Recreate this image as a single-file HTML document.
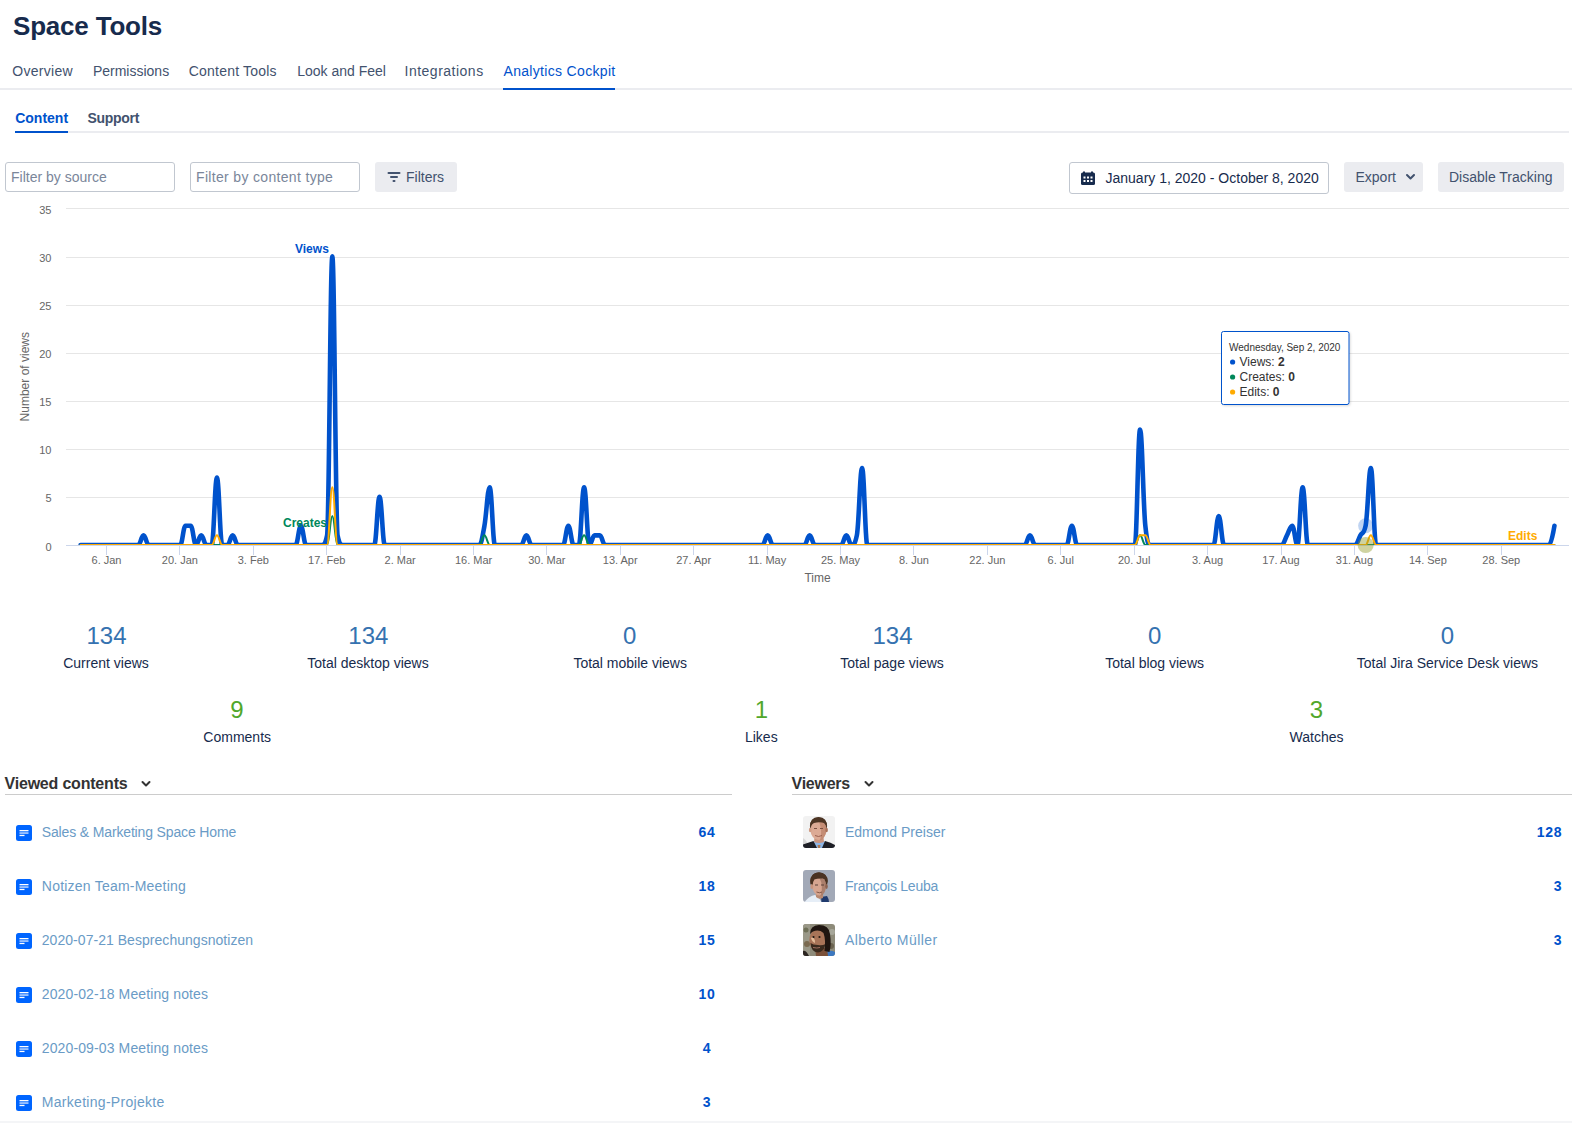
<!DOCTYPE html>
<html><head><meta charset="utf-8"><title>Space Tools - Analytics Cockpit</title>
<style>
html,body{margin:0;padding:0;background:#fff;}
body{width:1572px;height:1123px;overflow:hidden;position:relative;font-family:"Liberation Sans",sans-serif;}
.t{position:absolute;white-space:nowrap;line-height:1;}
.f14{font-size:14px;}
.nav{color:#42526E;font-size:14px;}
.line{position:absolute;}
.inp{position:absolute;box-sizing:border-box;border:1px solid #C1C7D0;border-radius:3px;background:#fff;}
.btn{position:absolute;box-sizing:border-box;border-radius:3px;background:#EBECF0;}
.num{color:#3572B0;font-size:24px;}
.lab{color:#172B4D;font-size:14px;}
.grn{color:#51A72B;}
.ctr{transform:translateX(-50%);}
.lnk{color:#6A9BC6;font-size:14px;}
.cnt{color:#0052CC;font-size:14px;font-weight:bold;letter-spacing:0.8px;}
.doc{position:absolute;width:16px;height:16px;}
.ava{position:absolute;width:32px;height:32px;border-radius:3px;overflow:hidden;}
</style></head>
<body>
<!-- Header -->
<div class="t" style="left:13px;top:13px;font-size:26px;font-weight:bold;color:#172B4D;letter-spacing:-0.2px;">Space Tools</div>

<div class="t nav" style="left:12.3px;top:64px;letter-spacing:0.28px;">Overview</div>
<div class="t nav" style="left:92.9px;top:64px;">Permissions</div>
<div class="t nav" style="left:188.8px;top:64px;letter-spacing:0.2px;">Content Tools</div>
<div class="t nav" style="left:297.2px;top:64px;letter-spacing:0px;">Look and Feel</div>
<div class="t nav" style="left:404.5px;top:64px;letter-spacing:0.5px;">Integrations</div>
<div class="t nav" style="left:503.5px;top:64px;letter-spacing:0.32px;color:#0052CC;">Analytics Cockpit</div>
<div class="line" style="left:0;top:88px;width:1572px;height:2px;background:#EBECF0;"></div>
<div class="line" style="left:503px;top:88px;width:112px;height:2px;background:#0052CC;"></div>

<div class="t" style="left:15.2px;top:111px;font-size:14px;font-weight:bold;color:#0052CC;">Content</div>
<div class="t" style="left:87.5px;top:111px;font-size:14px;font-weight:bold;color:#42526E;letter-spacing:-0.3px;">Support</div>
<div class="line" style="left:15px;top:131px;width:1554px;height:2px;background:#EBECF0;"></div>
<div class="line" style="left:15px;top:131px;width:53px;height:2px;background:#0052CC;"></div>

<!-- Filters row -->
<div class="inp" style="left:5px;top:162px;width:170px;height:30px;"></div>
<div class="t" style="left:11px;top:170px;font-size:14px;color:#7A869A;">Filter by source</div>
<div class="inp" style="left:190px;top:162px;width:170px;height:30px;"></div>
<div class="t" style="left:196px;top:170px;font-size:14px;color:#7A869A;letter-spacing:0.33px;">Filter by content type</div>
<div class="btn" style="left:375px;top:162px;width:82px;height:30px;"></div>
<svg style="position:absolute;left:387px;top:171px" width="15" height="12" viewBox="0 0 15 12"><rect x="0.5" y="1" width="13" height="2" rx="1" fill="#42526E"/><rect x="3" y="5" width="8" height="2" rx="1" fill="#42526E"/><rect x="5.5" y="9" width="3" height="2" rx="1" fill="#42526E"/></svg>
<div class="t" style="left:406px;top:170px;font-size:14px;color:#42526E;">Filters</div>

<div class="inp" style="left:1069px;top:162px;width:260px;height:32px;border-color:#C1C7D0;"></div>
<svg style="position:absolute;left:1081px;top:171px" width="14" height="14" viewBox="0 0 14 14"><path d="M3 0.5v2M11 0.5v2" stroke="#172B4D" stroke-width="2"/><rect x="0" y="1.5" width="14" height="12.5" rx="1.5" fill="#172B4D"/><g fill="#fff"><rect x="2.5" y="5.5" width="2" height="2"/><rect x="6" y="5.5" width="2" height="2"/><rect x="9.5" y="5.5" width="2" height="2"/><rect x="2.5" y="9" width="2" height="2"/><rect x="6" y="9" width="2" height="2"/><rect x="9.5" y="9" width="2" height="2"/></g></svg>
<div class="t" style="left:1105.5px;top:171px;font-size:14px;color:#172B4D;">January 1, 2020 - October 8, 2020</div>

<div class="btn" style="left:1344px;top:162px;width:79px;height:30px;"></div>
<div class="t" style="left:1355.5px;top:170px;font-size:14px;color:#42526E;">Export</div>
<svg style="position:absolute;left:1405px;top:173px" width="11" height="8" viewBox="0 0 11 8"><path d="M2 2l3.5 3.5L9 2" fill="none" stroke="#42526E" stroke-width="2" stroke-linecap="round" stroke-linejoin="round"/></svg>
<div class="btn" style="left:1438px;top:162px;width:126px;height:30px;"></div>
<div class="t" style="left:1449px;top:170px;font-size:14px;color:#42526E;">Disable Tracking</div>

<svg width="1572" height="420" viewBox="0 200 1572 420" style="position:absolute;left:0;top:200px">
<defs><clipPath id="pc"><rect x="66" y="200" width="1503" height="345"/></clipPath>
<filter id="sh" x="-10%" y="-10%" width="130%" height="130%"><feDropShadow dx="1" dy="1" stdDeviation="1" flood-color="#000" flood-opacity="0.15"/></filter></defs>
<path d="M 66 497.5 L 1569 497.5" stroke="#e6e6e6" stroke-width="1"/><path d="M 66 449.5 L 1569 449.5" stroke="#e6e6e6" stroke-width="1"/><path d="M 66 401.5 L 1569 401.5" stroke="#e6e6e6" stroke-width="1"/><path d="M 66 353.5 L 1569 353.5" stroke="#e6e6e6" stroke-width="1"/><path d="M 66 305.5 L 1569 305.5" stroke="#e6e6e6" stroke-width="1"/><path d="M 66 257.5 L 1569 257.5" stroke="#e6e6e6" stroke-width="1"/><path d="M 66 208.5 L 1569 208.5" stroke="#e6e6e6" stroke-width="1"/>
<path d="M 66 545.5 L 1569 545.5" stroke="#ccd6eb" stroke-width="1"/>
<g font-family="Liberation Sans" font-size="11" fill="#666"><path d="M 106.5 546 L 106.5 555" stroke="#ccd6eb" stroke-width="1"/><text x="106.50" y="564" text-anchor="middle">6. Jan</text><path d="M 179.5 546 L 179.5 555" stroke="#ccd6eb" stroke-width="1"/><text x="179.92" y="564" text-anchor="middle">20. Jan</text><path d="M 253.5 546 L 253.5 555" stroke="#ccd6eb" stroke-width="1"/><text x="253.34" y="564" text-anchor="middle">3. Feb</text><path d="M 326.5 546 L 326.5 555" stroke="#ccd6eb" stroke-width="1"/><text x="326.76" y="564" text-anchor="middle">17. Feb</text><path d="M 400.5 546 L 400.5 555" stroke="#ccd6eb" stroke-width="1"/><text x="400.18" y="564" text-anchor="middle">2. Mar</text><path d="M 473.5 546 L 473.5 555" stroke="#ccd6eb" stroke-width="1"/><text x="473.61" y="564" text-anchor="middle">16. Mar</text><path d="M 546.5 546 L 546.5 555" stroke="#ccd6eb" stroke-width="1"/><text x="546.81" y="564" text-anchor="middle">30. Mar</text><path d="M 620.5 546 L 620.5 555" stroke="#ccd6eb" stroke-width="1"/><text x="620.23" y="564" text-anchor="middle">13. Apr</text><path d="M 693.5 546 L 693.5 555" stroke="#ccd6eb" stroke-width="1"/><text x="693.65" y="564" text-anchor="middle">27. Apr</text><path d="M 767.5 546 L 767.5 555" stroke="#ccd6eb" stroke-width="1"/><text x="767.07" y="564" text-anchor="middle">11. May</text><path d="M 840.5 546 L 840.5 555" stroke="#ccd6eb" stroke-width="1"/><text x="840.49" y="564" text-anchor="middle">25. May</text><path d="M 913.5 546 L 913.5 555" stroke="#ccd6eb" stroke-width="1"/><text x="913.91" y="564" text-anchor="middle">8. Jun</text><path d="M 987.5 546 L 987.5 555" stroke="#ccd6eb" stroke-width="1"/><text x="987.33" y="564" text-anchor="middle">22. Jun</text><path d="M 1060.5 546 L 1060.5 555" stroke="#ccd6eb" stroke-width="1"/><text x="1060.75" y="564" text-anchor="middle">6. Jul</text><path d="M 1134.5 546 L 1134.5 555" stroke="#ccd6eb" stroke-width="1"/><text x="1134.17" y="564" text-anchor="middle">20. Jul</text><path d="M 1207.5 546 L 1207.5 555" stroke="#ccd6eb" stroke-width="1"/><text x="1207.60" y="564" text-anchor="middle">3. Aug</text><path d="M 1281.5 546 L 1281.5 555" stroke="#ccd6eb" stroke-width="1"/><text x="1281.02" y="564" text-anchor="middle">17. Aug</text><path d="M 1354.5 546 L 1354.5 555" stroke="#ccd6eb" stroke-width="1"/><text x="1354.44" y="564" text-anchor="middle">31. Aug</text><path d="M 1427.5 546 L 1427.5 555" stroke="#ccd6eb" stroke-width="1"/><text x="1427.86" y="564" text-anchor="middle">14. Sep</text><path d="M 1501.5 546 L 1501.5 555" stroke="#ccd6eb" stroke-width="1"/><text x="1501.28" y="564" text-anchor="middle">28. Sep</text><text x="51.5" y="550.5" text-anchor="end">0</text><text x="51.5" y="502.4" text-anchor="end">5</text><text x="51.5" y="454.2" text-anchor="end">10</text><text x="51.5" y="406.1" text-anchor="end">15</text><text x="51.5" y="358.0" text-anchor="end">20</text><text x="51.5" y="309.9" text-anchor="end">25</text><text x="51.5" y="261.7" text-anchor="end">30</text><text x="51.5" y="213.6" text-anchor="end">35</text></g>
<text x="817.5" y="581.8" text-anchor="middle" font-family="Liberation Sans" font-size="12" fill="#666">Time</text>
<text transform="translate(29.3 376.7) rotate(-90)" x="0" y="0" text-anchor="middle" font-family="Liberation Sans" font-size="12" fill="#666">Number of views</text>
<g clip-path="url(#pc)" fill="none" stroke-linejoin="round" stroke-linecap="round">
<path d="M 80.57 545.00 C 80.57 545.00 83.72 545.00 85.82 545.00 C 87.91 545.00 88.96 545.00 91.06 545.00 C 93.16 545.00 94.21 545.00 96.31 545.00 C 98.40 545.00 99.45 545.00 101.55 545.00 C 103.65 545.00 104.70 545.00 106.80 545.00 C 108.89 545.00 109.94 545.00 112.04 545.00 C 114.14 545.00 115.19 545.00 117.29 545.00 C 119.38 545.00 120.43 545.00 122.53 545.00 C 124.63 545.00 125.68 545.00 127.78 545.00 C 129.87 545.00 130.92 545.00 133.02 545.00 C 135.12 545.00 136.17 545.00 138.27 545.00 C 140.36 545.00 141.41 535.37 143.51 535.37 C 145.61 535.37 146.66 545.00 148.76 545.00 C 150.85 545.00 151.90 545.00 154.00 545.00 C 156.10 545.00 157.15 545.00 159.25 545.00 C 161.34 545.00 162.39 545.00 164.49 545.00 C 166.59 545.00 167.64 545.00 169.74 545.00 C 171.83 545.00 172.88 545.00 174.98 545.00 C 177.08 545.00 178.13 545.00 180.23 545.00 C 182.32 545.00 183.37 525.75 185.47 525.75 C 187.57 525.75 188.62 525.75 190.72 525.75 C 192.82 525.75 193.86 545.00 195.96 545.00 C 198.06 545.00 199.11 535.37 201.21 535.37 C 203.31 535.37 204.35 545.00 206.45 545.00 C 208.55 545.00 209.60 545.00 211.70 545.00 C 213.80 545.00 214.84 477.62 216.94 477.62 C 219.04 477.62 220.09 545.00 222.19 545.00 C 224.29 545.00 225.33 545.00 227.43 545.00 C 229.53 545.00 230.58 535.37 232.68 535.37 C 234.78 535.37 235.82 545.00 237.92 545.00 C 240.02 545.00 241.07 545.00 243.17 545.00 C 245.27 545.00 246.32 545.00 248.41 545.00 C 250.51 545.00 251.56 545.00 253.66 545.00 C 255.76 545.00 256.81 545.00 258.90 545.00 C 261.00 545.00 262.05 545.00 264.15 545.00 C 266.25 545.00 267.30 545.00 269.39 545.00 C 271.49 545.00 272.54 545.00 274.64 545.00 C 276.74 545.00 277.79 545.00 279.88 545.00 C 281.98 545.00 283.03 545.00 285.13 545.00 C 287.23 545.00 288.28 545.00 290.37 545.00 C 292.47 545.00 293.52 545.00 295.62 545.00 C 297.72 545.00 298.77 525.75 300.86 525.75 C 302.96 525.75 304.01 545.00 306.11 545.00 C 308.21 545.00 309.26 545.00 311.35 545.00 C 313.45 545.00 314.50 545.00 316.60 545.00 C 318.70 545.00 319.75 545.00 321.84 545.00 C 323.94 545.00 324.99 545.00 327.09 535.37 C 329.19 525.75 330.24 256.23 332.33 256.23 C 334.43 256.23 335.48 525.75 337.58 535.37 C 339.68 545.00 340.73 545.00 342.82 545.00 C 344.92 545.00 345.97 545.00 348.07 545.00 C 350.17 545.00 351.22 545.00 353.32 545.00 C 355.41 545.00 356.46 545.00 358.56 545.00 C 360.66 545.00 361.71 545.00 363.81 545.00 C 365.90 545.00 366.95 545.00 369.05 545.00 C 371.15 545.00 372.20 545.00 374.30 545.00 C 376.39 545.00 377.44 496.87 379.54 496.87 C 381.64 496.87 382.69 545.00 384.79 545.00 C 386.88 545.00 387.93 545.00 390.03 545.00 C 392.13 545.00 393.18 545.00 395.28 545.00 C 397.37 545.00 398.42 545.00 400.52 545.00 C 402.62 545.00 403.67 545.00 405.77 545.00 C 407.86 545.00 408.91 545.00 411.01 545.00 C 413.11 545.00 414.16 545.00 416.26 545.00 C 418.35 545.00 419.40 545.00 421.50 545.00 C 423.60 545.00 424.65 545.00 426.75 545.00 C 428.84 545.00 429.89 545.00 431.99 545.00 C 434.09 545.00 435.14 545.00 437.24 545.00 C 439.33 545.00 440.38 545.00 442.48 545.00 C 444.58 545.00 445.63 545.00 447.73 545.00 C 449.83 545.00 450.87 545.00 452.97 545.00 C 455.07 545.00 456.12 545.00 458.22 545.00 C 460.32 545.00 461.36 545.00 463.46 545.00 C 465.56 545.00 466.61 545.00 468.71 545.00 C 470.81 545.00 471.85 545.00 473.95 545.00 C 476.05 545.00 477.10 545.00 479.20 545.00 C 481.30 545.00 482.34 537.30 484.44 525.75 C 486.54 514.20 487.59 487.25 489.69 487.25 C 491.79 487.25 492.83 545.00 494.93 545.00 C 497.03 545.00 498.08 545.00 500.18 545.00 C 502.28 545.00 503.33 545.00 505.42 545.00 C 507.52 545.00 508.57 545.00 510.67 545.00 C 512.77 545.00 513.82 545.00 515.91 545.00 C 518.01 545.00 519.06 545.00 521.16 545.00 C 523.26 545.00 524.31 535.37 526.40 535.37 C 528.50 535.37 529.55 545.00 531.65 545.00 C 533.75 545.00 534.80 545.00 536.89 545.00 C 538.99 545.00 540.04 545.00 542.14 545.00 C 544.24 545.00 545.29 545.00 547.38 545.00 C 549.48 545.00 550.53 545.00 552.63 545.00 C 554.73 545.00 555.78 545.00 557.87 545.00 C 559.97 545.00 561.02 545.00 563.12 545.00 C 565.22 545.00 566.27 525.75 568.36 525.75 C 570.46 525.75 571.51 545.00 573.61 545.00 C 575.71 545.00 576.76 545.00 578.85 545.00 C 580.95 545.00 582.00 487.25 584.10 487.25 C 586.20 487.25 587.25 545.00 589.34 545.00 C 591.44 545.00 592.49 535.37 594.59 535.37 C 596.69 535.37 597.74 535.37 599.83 535.37 C 601.93 535.37 602.98 545.00 605.08 545.00 C 607.18 545.00 608.23 545.00 610.33 545.00 C 612.42 545.00 613.47 545.00 615.57 545.00 C 617.67 545.00 618.72 545.00 620.82 545.00 C 622.91 545.00 623.96 545.00 626.06 545.00 C 628.16 545.00 629.21 545.00 631.31 545.00 C 633.40 545.00 634.45 545.00 636.55 545.00 C 638.65 545.00 639.70 545.00 641.80 545.00 C 643.89 545.00 644.94 545.00 647.04 545.00 C 649.14 545.00 650.19 545.00 652.29 545.00 C 654.38 545.00 655.43 545.00 657.53 545.00 C 659.63 545.00 660.68 545.00 662.78 545.00 C 664.87 545.00 665.92 545.00 668.02 545.00 C 670.12 545.00 671.17 545.00 673.27 545.00 C 675.36 545.00 676.41 545.00 678.51 545.00 C 680.61 545.00 681.66 545.00 683.76 545.00 C 685.85 545.00 686.90 545.00 689.00 545.00 C 691.10 545.00 692.15 545.00 694.25 545.00 C 696.34 545.00 697.39 545.00 699.49 545.00 C 701.59 545.00 702.64 545.00 704.74 545.00 C 706.83 545.00 707.88 545.00 709.98 545.00 C 712.08 545.00 713.13 545.00 715.23 545.00 C 717.33 545.00 718.37 545.00 720.47 545.00 C 722.57 545.00 723.62 545.00 725.72 545.00 C 727.82 545.00 728.86 545.00 730.96 545.00 C 733.06 545.00 734.11 545.00 736.21 545.00 C 738.31 545.00 739.35 545.00 741.45 545.00 C 743.55 545.00 744.60 545.00 746.70 545.00 C 748.80 545.00 749.84 545.00 751.94 545.00 C 754.04 545.00 755.09 545.00 757.19 545.00 C 759.29 545.00 760.33 545.00 762.43 545.00 C 764.53 545.00 765.58 535.37 767.68 535.37 C 769.78 535.37 770.83 545.00 772.92 545.00 C 775.02 545.00 776.07 545.00 778.17 545.00 C 780.27 545.00 781.32 545.00 783.41 545.00 C 785.51 545.00 786.56 545.00 788.66 545.00 C 790.76 545.00 791.81 545.00 793.90 545.00 C 796.00 545.00 797.05 545.00 799.15 545.00 C 801.25 545.00 802.30 545.00 804.39 545.00 C 806.49 545.00 807.54 535.37 809.64 535.37 C 811.74 535.37 812.79 545.00 814.88 545.00 C 816.98 545.00 818.03 545.00 820.13 545.00 C 822.23 545.00 823.28 545.00 825.37 545.00 C 827.47 545.00 828.52 545.00 830.62 545.00 C 832.72 545.00 833.77 545.00 835.86 545.00 C 837.96 545.00 839.01 545.00 841.11 545.00 C 843.21 545.00 844.26 535.37 846.35 535.37 C 848.45 535.37 849.50 545.00 851.60 545.00 C 853.70 545.00 854.75 545.00 856.84 535.37 C 858.94 525.75 859.99 467.99 862.09 467.99 C 864.19 467.99 865.24 545.00 867.34 545.00 C 869.43 545.00 870.48 545.00 872.58 545.00 C 874.68 545.00 875.73 545.00 877.83 545.00 C 879.92 545.00 880.97 545.00 883.07 545.00 C 885.17 545.00 886.22 545.00 888.32 545.00 C 890.41 545.00 891.46 545.00 893.56 545.00 C 895.66 545.00 896.71 545.00 898.81 545.00 C 900.90 545.00 901.95 545.00 904.05 545.00 C 906.15 545.00 907.20 545.00 909.30 545.00 C 911.39 545.00 912.44 545.00 914.54 545.00 C 916.64 545.00 917.69 545.00 919.79 545.00 C 921.88 545.00 922.93 545.00 925.03 545.00 C 927.13 545.00 928.18 545.00 930.28 545.00 C 932.37 545.00 933.42 545.00 935.52 545.00 C 937.62 545.00 938.67 545.00 940.77 545.00 C 942.86 545.00 943.91 545.00 946.01 545.00 C 948.11 545.00 949.16 545.00 951.26 545.00 C 953.35 545.00 954.40 545.00 956.50 545.00 C 958.60 545.00 959.65 545.00 961.75 545.00 C 963.84 545.00 964.89 545.00 966.99 545.00 C 969.09 545.00 970.14 545.00 972.24 545.00 C 974.34 545.00 975.38 545.00 977.48 545.00 C 979.58 545.00 980.63 545.00 982.73 545.00 C 984.83 545.00 985.87 545.00 987.97 545.00 C 990.07 545.00 991.12 545.00 993.22 545.00 C 995.32 545.00 996.36 545.00 998.46 545.00 C 1000.56 545.00 1001.61 545.00 1003.71 545.00 C 1005.81 545.00 1006.85 545.00 1008.95 545.00 C 1011.05 545.00 1012.10 545.00 1014.20 545.00 C 1016.30 545.00 1017.34 545.00 1019.44 545.00 C 1021.54 545.00 1022.59 545.00 1024.69 545.00 C 1026.79 545.00 1027.84 535.37 1029.93 535.37 C 1032.03 535.37 1033.08 545.00 1035.18 545.00 C 1037.28 545.00 1038.33 545.00 1040.42 545.00 C 1042.52 545.00 1043.57 545.00 1045.67 545.00 C 1047.77 545.00 1048.82 545.00 1050.91 545.00 C 1053.01 545.00 1054.06 545.00 1056.16 545.00 C 1058.26 545.00 1059.31 545.00 1061.40 545.00 C 1063.50 545.00 1064.55 545.00 1066.65 545.00 C 1068.75 545.00 1069.80 525.75 1071.89 525.75 C 1073.99 525.75 1075.04 545.00 1077.14 545.00 C 1079.24 545.00 1080.29 545.00 1082.38 545.00 C 1084.48 545.00 1085.53 545.00 1087.63 545.00 C 1089.73 545.00 1090.78 545.00 1092.87 545.00 C 1094.97 545.00 1096.02 545.00 1098.12 545.00 C 1100.22 545.00 1101.27 545.00 1103.36 545.00 C 1105.46 545.00 1106.51 545.00 1108.61 545.00 C 1110.71 545.00 1111.76 545.00 1113.85 545.00 C 1115.95 545.00 1117.00 545.00 1119.10 545.00 C 1121.20 545.00 1122.25 545.00 1124.34 545.00 C 1126.44 545.00 1127.49 545.00 1129.59 545.00 C 1131.69 545.00 1132.74 545.00 1134.84 545.00 C 1136.93 545.00 1137.98 429.49 1140.08 429.49 C 1142.18 429.49 1143.23 506.50 1145.33 525.75 C 1147.42 545.00 1148.47 545.00 1150.57 545.00 C 1152.67 545.00 1153.72 545.00 1155.82 545.00 C 1157.91 545.00 1158.96 545.00 1161.06 545.00 C 1163.16 545.00 1164.21 545.00 1166.31 545.00 C 1168.40 545.00 1169.45 545.00 1171.55 545.00 C 1173.65 545.00 1174.70 545.00 1176.80 545.00 C 1178.89 545.00 1179.94 545.00 1182.04 545.00 C 1184.14 545.00 1185.19 545.00 1187.29 545.00 C 1189.38 545.00 1190.43 545.00 1192.53 545.00 C 1194.63 545.00 1195.68 545.00 1197.78 545.00 C 1199.87 545.00 1200.92 545.00 1203.02 545.00 C 1205.12 545.00 1206.17 545.00 1208.27 545.00 C 1210.36 545.00 1211.41 545.00 1213.51 545.00 C 1215.61 545.00 1216.66 516.12 1218.76 516.12 C 1220.85 516.12 1221.90 545.00 1224.00 545.00 C 1226.10 545.00 1227.15 545.00 1229.25 545.00 C 1231.34 545.00 1232.39 545.00 1234.49 545.00 C 1236.59 545.00 1237.64 545.00 1239.74 545.00 C 1241.84 545.00 1242.88 545.00 1244.98 545.00 C 1247.08 545.00 1248.13 545.00 1250.23 545.00 C 1252.33 545.00 1253.37 545.00 1255.47 545.00 C 1257.57 545.00 1258.62 545.00 1260.72 545.00 C 1262.82 545.00 1263.86 545.00 1265.96 545.00 C 1268.06 545.00 1269.11 545.00 1271.21 545.00 C 1273.31 545.00 1274.35 545.00 1276.45 545.00 C 1278.55 545.00 1279.60 545.00 1281.70 545.00 C 1283.80 545.00 1284.84 539.22 1286.94 535.37 C 1289.04 531.52 1290.09 525.75 1292.19 525.75 C 1294.29 525.75 1295.34 545.00 1297.43 545.00 C 1299.53 545.00 1300.58 487.25 1302.68 487.25 C 1304.78 487.25 1305.83 545.00 1307.92 545.00 C 1310.02 545.00 1311.07 545.00 1313.17 545.00 C 1315.27 545.00 1316.32 545.00 1318.41 545.00 C 1320.51 545.00 1321.56 545.00 1323.66 545.00 C 1325.76 545.00 1326.81 545.00 1328.90 545.00 C 1331.00 545.00 1332.05 545.00 1334.15 545.00 C 1336.25 545.00 1337.30 545.00 1339.39 545.00 C 1341.49 545.00 1342.54 545.00 1344.64 545.00 C 1346.74 545.00 1347.79 545.00 1349.88 545.00 C 1351.98 545.00 1353.03 545.00 1355.13 545.00 C 1357.23 545.00 1358.28 539.22 1360.37 535.37 C 1362.47 531.52 1363.52 535.37 1365.62 525.75 C 1367.72 516.12 1368.77 467.99 1370.86 467.99 C 1372.96 467.99 1374.01 545.00 1376.11 545.00 C 1378.21 545.00 1379.26 545.00 1381.35 545.00 C 1383.45 545.00 1384.50 545.00 1386.60 545.00 C 1388.70 545.00 1389.75 545.00 1391.84 545.00 C 1393.94 545.00 1394.99 545.00 1397.09 545.00 C 1399.19 545.00 1400.24 545.00 1402.34 545.00 C 1404.43 545.00 1405.48 545.00 1407.58 545.00 C 1409.68 545.00 1410.73 545.00 1412.83 545.00 C 1414.92 545.00 1415.97 545.00 1418.07 545.00 C 1420.17 545.00 1421.22 545.00 1423.32 545.00 C 1425.41 545.00 1426.46 545.00 1428.56 545.00 C 1430.66 545.00 1431.71 545.00 1433.81 545.00 C 1435.90 545.00 1436.95 545.00 1439.05 545.00 C 1441.15 545.00 1442.20 545.00 1444.30 545.00 C 1446.39 545.00 1447.44 545.00 1449.54 545.00 C 1451.64 545.00 1452.69 545.00 1454.79 545.00 C 1456.88 545.00 1457.93 545.00 1460.03 545.00 C 1462.13 545.00 1463.18 545.00 1465.28 545.00 C 1467.37 545.00 1468.42 545.00 1470.52 545.00 C 1472.62 545.00 1473.67 545.00 1475.77 545.00 C 1477.86 545.00 1478.91 545.00 1481.01 545.00 C 1483.11 545.00 1484.16 545.00 1486.26 545.00 C 1488.35 545.00 1489.40 545.00 1491.50 545.00 C 1493.60 545.00 1494.65 545.00 1496.75 545.00 C 1498.85 545.00 1499.89 545.00 1501.99 545.00 C 1504.09 545.00 1505.14 545.00 1507.24 545.00 C 1509.34 545.00 1510.38 545.00 1512.48 545.00 C 1514.58 545.00 1515.63 545.00 1517.73 545.00 C 1519.83 545.00 1520.87 545.00 1522.97 545.00 C 1525.07 545.00 1526.12 545.00 1528.22 545.00 C 1530.32 545.00 1531.36 545.00 1533.46 545.00 C 1535.56 545.00 1536.61 545.00 1538.71 545.00 C 1540.81 545.00 1541.85 545.00 1543.95 545.00 C 1546.05 545.00 1547.10 545.00 1549.20 545.00 C 1551.30 545.00 1554.44 525.75 1554.44 525.75" stroke="#0052CC" stroke-width="4.6"/>
<path d="M 80.57 545.00 C 80.57 545.00 83.72 545.00 85.82 545.00 C 87.91 545.00 88.96 545.00 91.06 545.00 C 93.16 545.00 94.21 545.00 96.31 545.00 C 98.40 545.00 99.45 545.00 101.55 545.00 C 103.65 545.00 104.70 545.00 106.80 545.00 C 108.89 545.00 109.94 545.00 112.04 545.00 C 114.14 545.00 115.19 545.00 117.29 545.00 C 119.38 545.00 120.43 545.00 122.53 545.00 C 124.63 545.00 125.68 545.00 127.78 545.00 C 129.87 545.00 130.92 545.00 133.02 545.00 C 135.12 545.00 136.17 545.00 138.27 545.00 C 140.36 545.00 141.41 545.00 143.51 545.00 C 145.61 545.00 146.66 545.00 148.76 545.00 C 150.85 545.00 151.90 545.00 154.00 545.00 C 156.10 545.00 157.15 545.00 159.25 545.00 C 161.34 545.00 162.39 545.00 164.49 545.00 C 166.59 545.00 167.64 545.00 169.74 545.00 C 171.83 545.00 172.88 545.00 174.98 545.00 C 177.08 545.00 178.13 545.00 180.23 545.00 C 182.32 545.00 183.37 545.00 185.47 545.00 C 187.57 545.00 188.62 545.00 190.72 545.00 C 192.82 545.00 193.86 545.00 195.96 545.00 C 198.06 545.00 199.11 545.00 201.21 545.00 C 203.31 545.00 204.35 545.00 206.45 545.00 C 208.55 545.00 209.60 545.00 211.70 545.00 C 213.80 545.00 214.84 545.00 216.94 545.00 C 219.04 545.00 220.09 545.00 222.19 545.00 C 224.29 545.00 225.33 545.00 227.43 545.00 C 229.53 545.00 230.58 545.00 232.68 545.00 C 234.78 545.00 235.82 545.00 237.92 545.00 C 240.02 545.00 241.07 545.00 243.17 545.00 C 245.27 545.00 246.32 545.00 248.41 545.00 C 250.51 545.00 251.56 545.00 253.66 545.00 C 255.76 545.00 256.81 545.00 258.90 545.00 C 261.00 545.00 262.05 545.00 264.15 545.00 C 266.25 545.00 267.30 545.00 269.39 545.00 C 271.49 545.00 272.54 545.00 274.64 545.00 C 276.74 545.00 277.79 545.00 279.88 545.00 C 281.98 545.00 283.03 545.00 285.13 545.00 C 287.23 545.00 288.28 545.00 290.37 545.00 C 292.47 545.00 293.52 545.00 295.62 545.00 C 297.72 545.00 298.77 545.00 300.86 545.00 C 302.96 545.00 304.01 545.00 306.11 545.00 C 308.21 545.00 309.26 545.00 311.35 545.00 C 313.45 545.00 314.50 545.00 316.60 545.00 C 318.70 545.00 319.75 545.00 321.84 545.00 C 323.94 545.00 324.99 545.00 327.09 545.00 C 329.19 545.00 330.24 516.12 332.33 516.12 C 334.43 516.12 335.48 545.00 337.58 545.00 C 339.68 545.00 340.73 545.00 342.82 545.00 C 344.92 545.00 345.97 545.00 348.07 545.00 C 350.17 545.00 351.22 545.00 353.32 545.00 C 355.41 545.00 356.46 545.00 358.56 545.00 C 360.66 545.00 361.71 545.00 363.81 545.00 C 365.90 545.00 366.95 545.00 369.05 545.00 C 371.15 545.00 372.20 545.00 374.30 545.00 C 376.39 545.00 377.44 545.00 379.54 545.00 C 381.64 545.00 382.69 545.00 384.79 545.00 C 386.88 545.00 387.93 545.00 390.03 545.00 C 392.13 545.00 393.18 545.00 395.28 545.00 C 397.37 545.00 398.42 545.00 400.52 545.00 C 402.62 545.00 403.67 545.00 405.77 545.00 C 407.86 545.00 408.91 545.00 411.01 545.00 C 413.11 545.00 414.16 545.00 416.26 545.00 C 418.35 545.00 419.40 545.00 421.50 545.00 C 423.60 545.00 424.65 545.00 426.75 545.00 C 428.84 545.00 429.89 545.00 431.99 545.00 C 434.09 545.00 435.14 545.00 437.24 545.00 C 439.33 545.00 440.38 545.00 442.48 545.00 C 444.58 545.00 445.63 545.00 447.73 545.00 C 449.83 545.00 450.87 545.00 452.97 545.00 C 455.07 545.00 456.12 545.00 458.22 545.00 C 460.32 545.00 461.36 545.00 463.46 545.00 C 465.56 545.00 466.61 545.00 468.71 545.00 C 470.81 545.00 471.85 545.00 473.95 545.00 C 476.05 545.00 477.10 545.00 479.20 545.00 C 481.30 545.00 482.34 535.37 484.44 535.37 C 486.54 535.37 487.59 545.00 489.69 545.00 C 491.79 545.00 492.83 545.00 494.93 545.00 C 497.03 545.00 498.08 545.00 500.18 545.00 C 502.28 545.00 503.33 545.00 505.42 545.00 C 507.52 545.00 508.57 545.00 510.67 545.00 C 512.77 545.00 513.82 545.00 515.91 545.00 C 518.01 545.00 519.06 545.00 521.16 545.00 C 523.26 545.00 524.31 545.00 526.40 545.00 C 528.50 545.00 529.55 545.00 531.65 545.00 C 533.75 545.00 534.80 545.00 536.89 545.00 C 538.99 545.00 540.04 545.00 542.14 545.00 C 544.24 545.00 545.29 545.00 547.38 545.00 C 549.48 545.00 550.53 545.00 552.63 545.00 C 554.73 545.00 555.78 545.00 557.87 545.00 C 559.97 545.00 561.02 545.00 563.12 545.00 C 565.22 545.00 566.27 545.00 568.36 545.00 C 570.46 545.00 571.51 545.00 573.61 545.00 C 575.71 545.00 576.76 545.00 578.85 545.00 C 580.95 545.00 582.00 535.37 584.10 535.37 C 586.20 535.37 587.25 545.00 589.34 545.00 C 591.44 545.00 592.49 545.00 594.59 545.00 C 596.69 545.00 597.74 545.00 599.83 545.00 C 601.93 545.00 602.98 545.00 605.08 545.00 C 607.18 545.00 608.23 545.00 610.33 545.00 C 612.42 545.00 613.47 545.00 615.57 545.00 C 617.67 545.00 618.72 545.00 620.82 545.00 C 622.91 545.00 623.96 545.00 626.06 545.00 C 628.16 545.00 629.21 545.00 631.31 545.00 C 633.40 545.00 634.45 545.00 636.55 545.00 C 638.65 545.00 639.70 545.00 641.80 545.00 C 643.89 545.00 644.94 545.00 647.04 545.00 C 649.14 545.00 650.19 545.00 652.29 545.00 C 654.38 545.00 655.43 545.00 657.53 545.00 C 659.63 545.00 660.68 545.00 662.78 545.00 C 664.87 545.00 665.92 545.00 668.02 545.00 C 670.12 545.00 671.17 545.00 673.27 545.00 C 675.36 545.00 676.41 545.00 678.51 545.00 C 680.61 545.00 681.66 545.00 683.76 545.00 C 685.85 545.00 686.90 545.00 689.00 545.00 C 691.10 545.00 692.15 545.00 694.25 545.00 C 696.34 545.00 697.39 545.00 699.49 545.00 C 701.59 545.00 702.64 545.00 704.74 545.00 C 706.83 545.00 707.88 545.00 709.98 545.00 C 712.08 545.00 713.13 545.00 715.23 545.00 C 717.33 545.00 718.37 545.00 720.47 545.00 C 722.57 545.00 723.62 545.00 725.72 545.00 C 727.82 545.00 728.86 545.00 730.96 545.00 C 733.06 545.00 734.11 545.00 736.21 545.00 C 738.31 545.00 739.35 545.00 741.45 545.00 C 743.55 545.00 744.60 545.00 746.70 545.00 C 748.80 545.00 749.84 545.00 751.94 545.00 C 754.04 545.00 755.09 545.00 757.19 545.00 C 759.29 545.00 760.33 545.00 762.43 545.00 C 764.53 545.00 765.58 545.00 767.68 545.00 C 769.78 545.00 770.83 545.00 772.92 545.00 C 775.02 545.00 776.07 545.00 778.17 545.00 C 780.27 545.00 781.32 545.00 783.41 545.00 C 785.51 545.00 786.56 545.00 788.66 545.00 C 790.76 545.00 791.81 545.00 793.90 545.00 C 796.00 545.00 797.05 545.00 799.15 545.00 C 801.25 545.00 802.30 545.00 804.39 545.00 C 806.49 545.00 807.54 545.00 809.64 545.00 C 811.74 545.00 812.79 545.00 814.88 545.00 C 816.98 545.00 818.03 545.00 820.13 545.00 C 822.23 545.00 823.28 545.00 825.37 545.00 C 827.47 545.00 828.52 545.00 830.62 545.00 C 832.72 545.00 833.77 545.00 835.86 545.00 C 837.96 545.00 839.01 545.00 841.11 545.00 C 843.21 545.00 844.26 545.00 846.35 545.00 C 848.45 545.00 849.50 545.00 851.60 545.00 C 853.70 545.00 854.75 545.00 856.84 545.00 C 858.94 545.00 859.99 545.00 862.09 545.00 C 864.19 545.00 865.24 545.00 867.34 545.00 C 869.43 545.00 870.48 545.00 872.58 545.00 C 874.68 545.00 875.73 545.00 877.83 545.00 C 879.92 545.00 880.97 545.00 883.07 545.00 C 885.17 545.00 886.22 545.00 888.32 545.00 C 890.41 545.00 891.46 545.00 893.56 545.00 C 895.66 545.00 896.71 545.00 898.81 545.00 C 900.90 545.00 901.95 545.00 904.05 545.00 C 906.15 545.00 907.20 545.00 909.30 545.00 C 911.39 545.00 912.44 545.00 914.54 545.00 C 916.64 545.00 917.69 545.00 919.79 545.00 C 921.88 545.00 922.93 545.00 925.03 545.00 C 927.13 545.00 928.18 545.00 930.28 545.00 C 932.37 545.00 933.42 545.00 935.52 545.00 C 937.62 545.00 938.67 545.00 940.77 545.00 C 942.86 545.00 943.91 545.00 946.01 545.00 C 948.11 545.00 949.16 545.00 951.26 545.00 C 953.35 545.00 954.40 545.00 956.50 545.00 C 958.60 545.00 959.65 545.00 961.75 545.00 C 963.84 545.00 964.89 545.00 966.99 545.00 C 969.09 545.00 970.14 545.00 972.24 545.00 C 974.34 545.00 975.38 545.00 977.48 545.00 C 979.58 545.00 980.63 545.00 982.73 545.00 C 984.83 545.00 985.87 545.00 987.97 545.00 C 990.07 545.00 991.12 545.00 993.22 545.00 C 995.32 545.00 996.36 545.00 998.46 545.00 C 1000.56 545.00 1001.61 545.00 1003.71 545.00 C 1005.81 545.00 1006.85 545.00 1008.95 545.00 C 1011.05 545.00 1012.10 545.00 1014.20 545.00 C 1016.30 545.00 1017.34 545.00 1019.44 545.00 C 1021.54 545.00 1022.59 545.00 1024.69 545.00 C 1026.79 545.00 1027.84 545.00 1029.93 545.00 C 1032.03 545.00 1033.08 545.00 1035.18 545.00 C 1037.28 545.00 1038.33 545.00 1040.42 545.00 C 1042.52 545.00 1043.57 545.00 1045.67 545.00 C 1047.77 545.00 1048.82 545.00 1050.91 545.00 C 1053.01 545.00 1054.06 545.00 1056.16 545.00 C 1058.26 545.00 1059.31 545.00 1061.40 545.00 C 1063.50 545.00 1064.55 545.00 1066.65 545.00 C 1068.75 545.00 1069.80 545.00 1071.89 545.00 C 1073.99 545.00 1075.04 545.00 1077.14 545.00 C 1079.24 545.00 1080.29 545.00 1082.38 545.00 C 1084.48 545.00 1085.53 545.00 1087.63 545.00 C 1089.73 545.00 1090.78 545.00 1092.87 545.00 C 1094.97 545.00 1096.02 545.00 1098.12 545.00 C 1100.22 545.00 1101.27 545.00 1103.36 545.00 C 1105.46 545.00 1106.51 545.00 1108.61 545.00 C 1110.71 545.00 1111.76 545.00 1113.85 545.00 C 1115.95 545.00 1117.00 545.00 1119.10 545.00 C 1121.20 545.00 1122.25 545.00 1124.34 545.00 C 1126.44 545.00 1127.49 545.00 1129.59 545.00 C 1131.69 545.00 1132.74 545.00 1134.84 545.00 C 1136.93 545.00 1137.98 535.37 1140.08 535.37 C 1142.18 535.37 1143.23 545.00 1145.33 545.00 C 1147.42 545.00 1148.47 545.00 1150.57 545.00 C 1152.67 545.00 1153.72 545.00 1155.82 545.00 C 1157.91 545.00 1158.96 545.00 1161.06 545.00 C 1163.16 545.00 1164.21 545.00 1166.31 545.00 C 1168.40 545.00 1169.45 545.00 1171.55 545.00 C 1173.65 545.00 1174.70 545.00 1176.80 545.00 C 1178.89 545.00 1179.94 545.00 1182.04 545.00 C 1184.14 545.00 1185.19 545.00 1187.29 545.00 C 1189.38 545.00 1190.43 545.00 1192.53 545.00 C 1194.63 545.00 1195.68 545.00 1197.78 545.00 C 1199.87 545.00 1200.92 545.00 1203.02 545.00 C 1205.12 545.00 1206.17 545.00 1208.27 545.00 C 1210.36 545.00 1211.41 545.00 1213.51 545.00 C 1215.61 545.00 1216.66 545.00 1218.76 545.00 C 1220.85 545.00 1221.90 545.00 1224.00 545.00 C 1226.10 545.00 1227.15 545.00 1229.25 545.00 C 1231.34 545.00 1232.39 545.00 1234.49 545.00 C 1236.59 545.00 1237.64 545.00 1239.74 545.00 C 1241.84 545.00 1242.88 545.00 1244.98 545.00 C 1247.08 545.00 1248.13 545.00 1250.23 545.00 C 1252.33 545.00 1253.37 545.00 1255.47 545.00 C 1257.57 545.00 1258.62 545.00 1260.72 545.00 C 1262.82 545.00 1263.86 545.00 1265.96 545.00 C 1268.06 545.00 1269.11 545.00 1271.21 545.00 C 1273.31 545.00 1274.35 545.00 1276.45 545.00 C 1278.55 545.00 1279.60 545.00 1281.70 545.00 C 1283.80 545.00 1284.84 545.00 1286.94 545.00 C 1289.04 545.00 1290.09 545.00 1292.19 545.00 C 1294.29 545.00 1295.34 545.00 1297.43 545.00 C 1299.53 545.00 1300.58 545.00 1302.68 545.00 C 1304.78 545.00 1305.83 545.00 1307.92 545.00 C 1310.02 545.00 1311.07 545.00 1313.17 545.00 C 1315.27 545.00 1316.32 545.00 1318.41 545.00 C 1320.51 545.00 1321.56 545.00 1323.66 545.00 C 1325.76 545.00 1326.81 545.00 1328.90 545.00 C 1331.00 545.00 1332.05 545.00 1334.15 545.00 C 1336.25 545.00 1337.30 545.00 1339.39 545.00 C 1341.49 545.00 1342.54 545.00 1344.64 545.00 C 1346.74 545.00 1347.79 545.00 1349.88 545.00 C 1351.98 545.00 1353.03 545.00 1355.13 545.00 C 1357.23 545.00 1358.28 545.00 1360.37 545.00 C 1362.47 545.00 1363.52 545.00 1365.62 545.00 C 1367.72 545.00 1368.77 545.00 1370.86 545.00 C 1372.96 545.00 1374.01 545.00 1376.11 545.00 C 1378.21 545.00 1379.26 545.00 1381.35 545.00 C 1383.45 545.00 1384.50 545.00 1386.60 545.00 C 1388.70 545.00 1389.75 545.00 1391.84 545.00 C 1393.94 545.00 1394.99 545.00 1397.09 545.00 C 1399.19 545.00 1400.24 545.00 1402.34 545.00 C 1404.43 545.00 1405.48 545.00 1407.58 545.00 C 1409.68 545.00 1410.73 545.00 1412.83 545.00 C 1414.92 545.00 1415.97 545.00 1418.07 545.00 C 1420.17 545.00 1421.22 545.00 1423.32 545.00 C 1425.41 545.00 1426.46 545.00 1428.56 545.00 C 1430.66 545.00 1431.71 545.00 1433.81 545.00 C 1435.90 545.00 1436.95 545.00 1439.05 545.00 C 1441.15 545.00 1442.20 545.00 1444.30 545.00 C 1446.39 545.00 1447.44 545.00 1449.54 545.00 C 1451.64 545.00 1452.69 545.00 1454.79 545.00 C 1456.88 545.00 1457.93 545.00 1460.03 545.00 C 1462.13 545.00 1463.18 545.00 1465.28 545.00 C 1467.37 545.00 1468.42 545.00 1470.52 545.00 C 1472.62 545.00 1473.67 545.00 1475.77 545.00 C 1477.86 545.00 1478.91 545.00 1481.01 545.00 C 1483.11 545.00 1484.16 545.00 1486.26 545.00 C 1488.35 545.00 1489.40 545.00 1491.50 545.00 C 1493.60 545.00 1494.65 545.00 1496.75 545.00 C 1498.85 545.00 1499.89 545.00 1501.99 545.00 C 1504.09 545.00 1505.14 545.00 1507.24 545.00 C 1509.34 545.00 1510.38 545.00 1512.48 545.00 C 1514.58 545.00 1515.63 545.00 1517.73 545.00 C 1519.83 545.00 1520.87 545.00 1522.97 545.00 C 1525.07 545.00 1526.12 545.00 1528.22 545.00 C 1530.32 545.00 1531.36 545.00 1533.46 545.00 C 1535.56 545.00 1536.61 545.00 1538.71 545.00 C 1540.81 545.00 1541.85 545.00 1543.95 545.00 C 1546.05 545.00 1547.10 545.00 1549.20 545.00 C 1551.30 545.00 1554.44 545.00 1554.44 545.00" stroke="#00875A" stroke-width="2"/>
<path d="M 80.57 545.00 C 80.57 545.00 83.72 545.00 85.82 545.00 C 87.91 545.00 88.96 545.00 91.06 545.00 C 93.16 545.00 94.21 545.00 96.31 545.00 C 98.40 545.00 99.45 545.00 101.55 545.00 C 103.65 545.00 104.70 545.00 106.80 545.00 C 108.89 545.00 109.94 545.00 112.04 545.00 C 114.14 545.00 115.19 545.00 117.29 545.00 C 119.38 545.00 120.43 545.00 122.53 545.00 C 124.63 545.00 125.68 545.00 127.78 545.00 C 129.87 545.00 130.92 545.00 133.02 545.00 C 135.12 545.00 136.17 545.00 138.27 545.00 C 140.36 545.00 141.41 545.00 143.51 545.00 C 145.61 545.00 146.66 545.00 148.76 545.00 C 150.85 545.00 151.90 545.00 154.00 545.00 C 156.10 545.00 157.15 545.00 159.25 545.00 C 161.34 545.00 162.39 545.00 164.49 545.00 C 166.59 545.00 167.64 545.00 169.74 545.00 C 171.83 545.00 172.88 545.00 174.98 545.00 C 177.08 545.00 178.13 545.00 180.23 545.00 C 182.32 545.00 183.37 545.00 185.47 545.00 C 187.57 545.00 188.62 545.00 190.72 545.00 C 192.82 545.00 193.86 545.00 195.96 545.00 C 198.06 545.00 199.11 545.00 201.21 545.00 C 203.31 545.00 204.35 545.00 206.45 545.00 C 208.55 545.00 209.60 545.00 211.70 545.00 C 213.80 545.00 214.84 535.37 216.94 535.37 C 219.04 535.37 220.09 545.00 222.19 545.00 C 224.29 545.00 225.33 545.00 227.43 545.00 C 229.53 545.00 230.58 545.00 232.68 545.00 C 234.78 545.00 235.82 545.00 237.92 545.00 C 240.02 545.00 241.07 545.00 243.17 545.00 C 245.27 545.00 246.32 545.00 248.41 545.00 C 250.51 545.00 251.56 545.00 253.66 545.00 C 255.76 545.00 256.81 545.00 258.90 545.00 C 261.00 545.00 262.05 545.00 264.15 545.00 C 266.25 545.00 267.30 545.00 269.39 545.00 C 271.49 545.00 272.54 545.00 274.64 545.00 C 276.74 545.00 277.79 545.00 279.88 545.00 C 281.98 545.00 283.03 545.00 285.13 545.00 C 287.23 545.00 288.28 545.00 290.37 545.00 C 292.47 545.00 293.52 545.00 295.62 545.00 C 297.72 545.00 298.77 545.00 300.86 545.00 C 302.96 545.00 304.01 545.00 306.11 545.00 C 308.21 545.00 309.26 545.00 311.35 545.00 C 313.45 545.00 314.50 545.00 316.60 545.00 C 318.70 545.00 319.75 545.00 321.84 545.00 C 323.94 545.00 324.99 545.00 327.09 545.00 C 329.19 545.00 330.24 487.25 332.33 487.25 C 334.43 487.25 335.48 545.00 337.58 545.00 C 339.68 545.00 340.73 545.00 342.82 545.00 C 344.92 545.00 345.97 545.00 348.07 545.00 C 350.17 545.00 351.22 545.00 353.32 545.00 C 355.41 545.00 356.46 545.00 358.56 545.00 C 360.66 545.00 361.71 545.00 363.81 545.00 C 365.90 545.00 366.95 545.00 369.05 545.00 C 371.15 545.00 372.20 545.00 374.30 545.00 C 376.39 545.00 377.44 545.00 379.54 545.00 C 381.64 545.00 382.69 545.00 384.79 545.00 C 386.88 545.00 387.93 545.00 390.03 545.00 C 392.13 545.00 393.18 545.00 395.28 545.00 C 397.37 545.00 398.42 545.00 400.52 545.00 C 402.62 545.00 403.67 545.00 405.77 545.00 C 407.86 545.00 408.91 545.00 411.01 545.00 C 413.11 545.00 414.16 545.00 416.26 545.00 C 418.35 545.00 419.40 545.00 421.50 545.00 C 423.60 545.00 424.65 545.00 426.75 545.00 C 428.84 545.00 429.89 545.00 431.99 545.00 C 434.09 545.00 435.14 545.00 437.24 545.00 C 439.33 545.00 440.38 545.00 442.48 545.00 C 444.58 545.00 445.63 545.00 447.73 545.00 C 449.83 545.00 450.87 545.00 452.97 545.00 C 455.07 545.00 456.12 545.00 458.22 545.00 C 460.32 545.00 461.36 545.00 463.46 545.00 C 465.56 545.00 466.61 545.00 468.71 545.00 C 470.81 545.00 471.85 545.00 473.95 545.00 C 476.05 545.00 477.10 545.00 479.20 545.00 C 481.30 545.00 482.34 545.00 484.44 545.00 C 486.54 545.00 487.59 545.00 489.69 545.00 C 491.79 545.00 492.83 545.00 494.93 545.00 C 497.03 545.00 498.08 545.00 500.18 545.00 C 502.28 545.00 503.33 545.00 505.42 545.00 C 507.52 545.00 508.57 545.00 510.67 545.00 C 512.77 545.00 513.82 545.00 515.91 545.00 C 518.01 545.00 519.06 545.00 521.16 545.00 C 523.26 545.00 524.31 545.00 526.40 545.00 C 528.50 545.00 529.55 545.00 531.65 545.00 C 533.75 545.00 534.80 545.00 536.89 545.00 C 538.99 545.00 540.04 545.00 542.14 545.00 C 544.24 545.00 545.29 545.00 547.38 545.00 C 549.48 545.00 550.53 545.00 552.63 545.00 C 554.73 545.00 555.78 545.00 557.87 545.00 C 559.97 545.00 561.02 545.00 563.12 545.00 C 565.22 545.00 566.27 545.00 568.36 545.00 C 570.46 545.00 571.51 545.00 573.61 545.00 C 575.71 545.00 576.76 545.00 578.85 545.00 C 580.95 545.00 582.00 545.00 584.10 545.00 C 586.20 545.00 587.25 545.00 589.34 545.00 C 591.44 545.00 592.49 545.00 594.59 545.00 C 596.69 545.00 597.74 545.00 599.83 545.00 C 601.93 545.00 602.98 545.00 605.08 545.00 C 607.18 545.00 608.23 545.00 610.33 545.00 C 612.42 545.00 613.47 545.00 615.57 545.00 C 617.67 545.00 618.72 545.00 620.82 545.00 C 622.91 545.00 623.96 545.00 626.06 545.00 C 628.16 545.00 629.21 545.00 631.31 545.00 C 633.40 545.00 634.45 545.00 636.55 545.00 C 638.65 545.00 639.70 545.00 641.80 545.00 C 643.89 545.00 644.94 545.00 647.04 545.00 C 649.14 545.00 650.19 545.00 652.29 545.00 C 654.38 545.00 655.43 545.00 657.53 545.00 C 659.63 545.00 660.68 545.00 662.78 545.00 C 664.87 545.00 665.92 545.00 668.02 545.00 C 670.12 545.00 671.17 545.00 673.27 545.00 C 675.36 545.00 676.41 545.00 678.51 545.00 C 680.61 545.00 681.66 545.00 683.76 545.00 C 685.85 545.00 686.90 545.00 689.00 545.00 C 691.10 545.00 692.15 545.00 694.25 545.00 C 696.34 545.00 697.39 545.00 699.49 545.00 C 701.59 545.00 702.64 545.00 704.74 545.00 C 706.83 545.00 707.88 545.00 709.98 545.00 C 712.08 545.00 713.13 545.00 715.23 545.00 C 717.33 545.00 718.37 545.00 720.47 545.00 C 722.57 545.00 723.62 545.00 725.72 545.00 C 727.82 545.00 728.86 545.00 730.96 545.00 C 733.06 545.00 734.11 545.00 736.21 545.00 C 738.31 545.00 739.35 545.00 741.45 545.00 C 743.55 545.00 744.60 545.00 746.70 545.00 C 748.80 545.00 749.84 545.00 751.94 545.00 C 754.04 545.00 755.09 545.00 757.19 545.00 C 759.29 545.00 760.33 545.00 762.43 545.00 C 764.53 545.00 765.58 545.00 767.68 545.00 C 769.78 545.00 770.83 545.00 772.92 545.00 C 775.02 545.00 776.07 545.00 778.17 545.00 C 780.27 545.00 781.32 545.00 783.41 545.00 C 785.51 545.00 786.56 545.00 788.66 545.00 C 790.76 545.00 791.81 545.00 793.90 545.00 C 796.00 545.00 797.05 545.00 799.15 545.00 C 801.25 545.00 802.30 545.00 804.39 545.00 C 806.49 545.00 807.54 545.00 809.64 545.00 C 811.74 545.00 812.79 545.00 814.88 545.00 C 816.98 545.00 818.03 545.00 820.13 545.00 C 822.23 545.00 823.28 545.00 825.37 545.00 C 827.47 545.00 828.52 545.00 830.62 545.00 C 832.72 545.00 833.77 545.00 835.86 545.00 C 837.96 545.00 839.01 545.00 841.11 545.00 C 843.21 545.00 844.26 545.00 846.35 545.00 C 848.45 545.00 849.50 545.00 851.60 545.00 C 853.70 545.00 854.75 545.00 856.84 545.00 C 858.94 545.00 859.99 545.00 862.09 545.00 C 864.19 545.00 865.24 545.00 867.34 545.00 C 869.43 545.00 870.48 545.00 872.58 545.00 C 874.68 545.00 875.73 545.00 877.83 545.00 C 879.92 545.00 880.97 545.00 883.07 545.00 C 885.17 545.00 886.22 545.00 888.32 545.00 C 890.41 545.00 891.46 545.00 893.56 545.00 C 895.66 545.00 896.71 545.00 898.81 545.00 C 900.90 545.00 901.95 545.00 904.05 545.00 C 906.15 545.00 907.20 545.00 909.30 545.00 C 911.39 545.00 912.44 545.00 914.54 545.00 C 916.64 545.00 917.69 545.00 919.79 545.00 C 921.88 545.00 922.93 545.00 925.03 545.00 C 927.13 545.00 928.18 545.00 930.28 545.00 C 932.37 545.00 933.42 545.00 935.52 545.00 C 937.62 545.00 938.67 545.00 940.77 545.00 C 942.86 545.00 943.91 545.00 946.01 545.00 C 948.11 545.00 949.16 545.00 951.26 545.00 C 953.35 545.00 954.40 545.00 956.50 545.00 C 958.60 545.00 959.65 545.00 961.75 545.00 C 963.84 545.00 964.89 545.00 966.99 545.00 C 969.09 545.00 970.14 545.00 972.24 545.00 C 974.34 545.00 975.38 545.00 977.48 545.00 C 979.58 545.00 980.63 545.00 982.73 545.00 C 984.83 545.00 985.87 545.00 987.97 545.00 C 990.07 545.00 991.12 545.00 993.22 545.00 C 995.32 545.00 996.36 545.00 998.46 545.00 C 1000.56 545.00 1001.61 545.00 1003.71 545.00 C 1005.81 545.00 1006.85 545.00 1008.95 545.00 C 1011.05 545.00 1012.10 545.00 1014.20 545.00 C 1016.30 545.00 1017.34 545.00 1019.44 545.00 C 1021.54 545.00 1022.59 545.00 1024.69 545.00 C 1026.79 545.00 1027.84 545.00 1029.93 545.00 C 1032.03 545.00 1033.08 545.00 1035.18 545.00 C 1037.28 545.00 1038.33 545.00 1040.42 545.00 C 1042.52 545.00 1043.57 545.00 1045.67 545.00 C 1047.77 545.00 1048.82 545.00 1050.91 545.00 C 1053.01 545.00 1054.06 545.00 1056.16 545.00 C 1058.26 545.00 1059.31 545.00 1061.40 545.00 C 1063.50 545.00 1064.55 545.00 1066.65 545.00 C 1068.75 545.00 1069.80 545.00 1071.89 545.00 C 1073.99 545.00 1075.04 545.00 1077.14 545.00 C 1079.24 545.00 1080.29 545.00 1082.38 545.00 C 1084.48 545.00 1085.53 545.00 1087.63 545.00 C 1089.73 545.00 1090.78 545.00 1092.87 545.00 C 1094.97 545.00 1096.02 545.00 1098.12 545.00 C 1100.22 545.00 1101.27 545.00 1103.36 545.00 C 1105.46 545.00 1106.51 545.00 1108.61 545.00 C 1110.71 545.00 1111.76 545.00 1113.85 545.00 C 1115.95 545.00 1117.00 545.00 1119.10 545.00 C 1121.20 545.00 1122.25 545.00 1124.34 545.00 C 1126.44 545.00 1127.49 545.00 1129.59 545.00 C 1131.69 545.00 1132.74 545.00 1134.84 545.00 C 1136.93 545.00 1137.98 535.37 1140.08 535.37 C 1142.18 535.37 1143.23 535.37 1145.33 535.37 C 1147.42 535.37 1148.47 545.00 1150.57 545.00 C 1152.67 545.00 1153.72 545.00 1155.82 545.00 C 1157.91 545.00 1158.96 545.00 1161.06 545.00 C 1163.16 545.00 1164.21 545.00 1166.31 545.00 C 1168.40 545.00 1169.45 545.00 1171.55 545.00 C 1173.65 545.00 1174.70 545.00 1176.80 545.00 C 1178.89 545.00 1179.94 545.00 1182.04 545.00 C 1184.14 545.00 1185.19 545.00 1187.29 545.00 C 1189.38 545.00 1190.43 545.00 1192.53 545.00 C 1194.63 545.00 1195.68 545.00 1197.78 545.00 C 1199.87 545.00 1200.92 545.00 1203.02 545.00 C 1205.12 545.00 1206.17 545.00 1208.27 545.00 C 1210.36 545.00 1211.41 545.00 1213.51 545.00 C 1215.61 545.00 1216.66 545.00 1218.76 545.00 C 1220.85 545.00 1221.90 545.00 1224.00 545.00 C 1226.10 545.00 1227.15 545.00 1229.25 545.00 C 1231.34 545.00 1232.39 545.00 1234.49 545.00 C 1236.59 545.00 1237.64 545.00 1239.74 545.00 C 1241.84 545.00 1242.88 545.00 1244.98 545.00 C 1247.08 545.00 1248.13 545.00 1250.23 545.00 C 1252.33 545.00 1253.37 545.00 1255.47 545.00 C 1257.57 545.00 1258.62 545.00 1260.72 545.00 C 1262.82 545.00 1263.86 545.00 1265.96 545.00 C 1268.06 545.00 1269.11 545.00 1271.21 545.00 C 1273.31 545.00 1274.35 545.00 1276.45 545.00 C 1278.55 545.00 1279.60 545.00 1281.70 545.00 C 1283.80 545.00 1284.84 545.00 1286.94 545.00 C 1289.04 545.00 1290.09 545.00 1292.19 545.00 C 1294.29 545.00 1295.34 545.00 1297.43 545.00 C 1299.53 545.00 1300.58 545.00 1302.68 545.00 C 1304.78 545.00 1305.83 545.00 1307.92 545.00 C 1310.02 545.00 1311.07 545.00 1313.17 545.00 C 1315.27 545.00 1316.32 545.00 1318.41 545.00 C 1320.51 545.00 1321.56 545.00 1323.66 545.00 C 1325.76 545.00 1326.81 545.00 1328.90 545.00 C 1331.00 545.00 1332.05 545.00 1334.15 545.00 C 1336.25 545.00 1337.30 545.00 1339.39 545.00 C 1341.49 545.00 1342.54 545.00 1344.64 545.00 C 1346.74 545.00 1347.79 545.00 1349.88 545.00 C 1351.98 545.00 1353.03 545.00 1355.13 545.00 C 1357.23 545.00 1358.28 545.00 1360.37 545.00 C 1362.47 545.00 1363.52 545.00 1365.62 545.00 C 1367.72 545.00 1368.77 535.37 1370.86 535.37 C 1372.96 535.37 1374.01 545.00 1376.11 545.00 C 1378.21 545.00 1379.26 545.00 1381.35 545.00 C 1383.45 545.00 1384.50 545.00 1386.60 545.00 C 1388.70 545.00 1389.75 545.00 1391.84 545.00 C 1393.94 545.00 1394.99 545.00 1397.09 545.00 C 1399.19 545.00 1400.24 545.00 1402.34 545.00 C 1404.43 545.00 1405.48 545.00 1407.58 545.00 C 1409.68 545.00 1410.73 545.00 1412.83 545.00 C 1414.92 545.00 1415.97 545.00 1418.07 545.00 C 1420.17 545.00 1421.22 545.00 1423.32 545.00 C 1425.41 545.00 1426.46 545.00 1428.56 545.00 C 1430.66 545.00 1431.71 545.00 1433.81 545.00 C 1435.90 545.00 1436.95 545.00 1439.05 545.00 C 1441.15 545.00 1442.20 545.00 1444.30 545.00 C 1446.39 545.00 1447.44 545.00 1449.54 545.00 C 1451.64 545.00 1452.69 545.00 1454.79 545.00 C 1456.88 545.00 1457.93 545.00 1460.03 545.00 C 1462.13 545.00 1463.18 545.00 1465.28 545.00 C 1467.37 545.00 1468.42 545.00 1470.52 545.00 C 1472.62 545.00 1473.67 545.00 1475.77 545.00 C 1477.86 545.00 1478.91 545.00 1481.01 545.00 C 1483.11 545.00 1484.16 545.00 1486.26 545.00 C 1488.35 545.00 1489.40 545.00 1491.50 545.00 C 1493.60 545.00 1494.65 545.00 1496.75 545.00 C 1498.85 545.00 1499.89 545.00 1501.99 545.00 C 1504.09 545.00 1505.14 545.00 1507.24 545.00 C 1509.34 545.00 1510.38 545.00 1512.48 545.00 C 1514.58 545.00 1515.63 545.00 1517.73 545.00 C 1519.83 545.00 1520.87 545.00 1522.97 545.00 C 1525.07 545.00 1526.12 545.00 1528.22 545.00 C 1530.32 545.00 1531.36 545.00 1533.46 545.00 C 1535.56 545.00 1536.61 545.00 1538.71 545.00 C 1540.81 545.00 1541.85 545.00 1543.95 545.00 C 1546.05 545.00 1547.10 545.00 1549.20 545.00 C 1551.30 545.00 1554.44 545.00 1554.44 545.00" stroke="#FFAB00" stroke-width="2"/>
</g>
<circle cx="1365.62" cy="525.75" r="7.5" fill="#0052CC" fill-opacity="0.25"/>
<circle cx="1365.62" cy="545.00" r="8" fill="#00875A" fill-opacity="0.25"/>
<circle cx="1365.62" cy="545.00" r="8" fill="#FFAB00" fill-opacity="0.25"/>
<g font-family="Liberation Sans" font-size="12" font-weight="bold">
<text x="295" y="252.8" fill="#0052CC">Views</text>
<text x="283" y="526.8" fill="#00875A">Creates</text>
<text x="1508" y="539.8" fill="#FFAB00">Edits</text>
</g>
<g filter="url(#sh)"><rect x="1221.5" y="331.5" width="127.5" height="73" rx="2" ry="2" fill="#fff" stroke="#0052CC" stroke-width="1"/></g>
<g font-family="Liberation Sans" fill="#333">
<text x="1229" y="350.5" font-size="10">Wednesday, Sep 2, 2020</text>
<circle cx="1232.6" cy="362" r="2.6" fill="#0052CC"/><text x="1239.5" y="365.8" font-size="12">Views: <tspan font-weight="bold">2</tspan></text>
<circle cx="1232.6" cy="377" r="2.6" fill="#00875A"/><text x="1239.5" y="380.8" font-size="12">Creates: <tspan font-weight="bold">0</tspan></text>
<circle cx="1232.6" cy="392" r="2.6" fill="#FFAB00"/><text x="1239.5" y="395.8" font-size="12">Edits: <tspan font-weight="bold">0</tspan></text>
</g>
</svg>

<!-- Stats -->
<div class="t num ctr" style="left:106.5px;top:624px;">134</div>
<div class="t lab ctr" style="left:106px;top:656px;">Current views</div>
<div class="t num ctr" style="left:368.4px;top:624px;">134</div>
<div class="t lab ctr" style="left:368px;top:656px;">Total desktop views</div>
<div class="t num ctr" style="left:629.7px;top:624px;">0</div>
<div class="t lab ctr" style="left:630.2px;top:656px;">Total mobile views</div>
<div class="t num ctr" style="left:892.5px;top:624px;">134</div>
<div class="t lab ctr" style="left:892.1px;top:656px;">Total page views</div>
<div class="t num ctr" style="left:1154.6px;top:624px;">0</div>
<div class="t lab ctr" style="left:1154.6px;top:656px;">Total blog views</div>
<div class="t num ctr" style="left:1447.5px;top:624px;">0</div>
<div class="t lab ctr" style="left:1447.4px;top:656px;">Total Jira Service Desk views</div>

<div class="t num grn ctr" style="left:236.9px;top:698px;">9</div>
<div class="t lab ctr" style="left:237.2px;top:730px;">Comments</div>
<div class="t num grn ctr" style="left:761.5px;top:698px;">1</div>
<div class="t lab ctr" style="left:761.3px;top:730px;">Likes</div>
<div class="t num grn ctr" style="left:1316.4px;top:698px;">3</div>
<div class="t lab ctr" style="left:1316.5px;top:730px;">Watches</div>

<!-- Viewed contents -->
<div class="t" style="left:4.5px;top:776px;font-size:16px;font-weight:bold;color:#333;letter-spacing:-0.2px;">Viewed contents</div>
<svg style="position:absolute;left:140px;top:779px" width="12" height="10" viewBox="0 0 12 10"><path d="M2.5 3l3.5 3.5L9.5 3" fill="none" stroke="#333" stroke-width="2" stroke-linecap="round" stroke-linejoin="round"/></svg>
<div class="line" style="left:5px;top:794px;width:727px;height:1px;background:#CCCCCC;"></div>

<div class="t" style="left:791.5px;top:776px;font-size:16px;font-weight:bold;color:#333;letter-spacing:-0.25px;">Viewers</div>
<svg style="position:absolute;left:863px;top:779px" width="12" height="10" viewBox="0 0 12 10"><path d="M2.5 3l3.5 3.5L9.5 3" fill="none" stroke="#333" stroke-width="2" stroke-linecap="round" stroke-linejoin="round"/></svg>
<div class="line" style="left:792px;top:794px;width:780px;height:1px;background:#CCCCCC;"></div>

<svg class="doc" style="left:16px;top:825px" viewBox="0 0 16 16"><rect width="16" height="16" rx="2.5" fill="#0065FF"/><rect x="3.5" y="5" width="9" height="1.3" fill="#fff"/><rect x="3.5" y="7.4" width="9" height="1.3" fill="#fff" opacity="0.85"/><rect x="3.5" y="9.8" width="5" height="1.3" fill="#fff"/></svg>
<div class="t lnk" style="left:41.8px;top:825px;letter-spacing:-0.15px;">Sales &amp; Marketing Space Home</div>
<div class="t cnt ctr" style="left:707px;top:825px;">64</div>
<svg class="doc" style="left:16px;top:879px" viewBox="0 0 16 16"><rect width="16" height="16" rx="2.5" fill="#0065FF"/><rect x="3.5" y="5" width="9" height="1.3" fill="#fff"/><rect x="3.5" y="7.4" width="9" height="1.3" fill="#fff" opacity="0.85"/><rect x="3.5" y="9.8" width="5" height="1.3" fill="#fff"/></svg>
<div class="t lnk" style="left:41.8px;top:879px;letter-spacing:0.22px;">Notizen Team-Meeting</div>
<div class="t cnt ctr" style="left:707px;top:879px;">18</div>
<svg class="doc" style="left:16px;top:933px" viewBox="0 0 16 16"><rect width="16" height="16" rx="2.5" fill="#0065FF"/><rect x="3.5" y="5" width="9" height="1.3" fill="#fff"/><rect x="3.5" y="7.4" width="9" height="1.3" fill="#fff" opacity="0.85"/><rect x="3.5" y="9.8" width="5" height="1.3" fill="#fff"/></svg>
<div class="t lnk" style="left:41.8px;top:933px;letter-spacing:0.04px;">2020-07-21 Besprechungsnotizen</div>
<div class="t cnt ctr" style="left:707px;top:933px;">15</div>
<svg class="doc" style="left:16px;top:987px" viewBox="0 0 16 16"><rect width="16" height="16" rx="2.5" fill="#0065FF"/><rect x="3.5" y="5" width="9" height="1.3" fill="#fff"/><rect x="3.5" y="7.4" width="9" height="1.3" fill="#fff" opacity="0.85"/><rect x="3.5" y="9.8" width="5" height="1.3" fill="#fff"/></svg>
<div class="t lnk" style="left:41.8px;top:987px;letter-spacing:0.12px;">2020-02-18 Meeting notes</div>
<div class="t cnt ctr" style="left:707px;top:987px;">10</div>
<svg class="doc" style="left:16px;top:1041px" viewBox="0 0 16 16"><rect width="16" height="16" rx="2.5" fill="#0065FF"/><rect x="3.5" y="5" width="9" height="1.3" fill="#fff"/><rect x="3.5" y="7.4" width="9" height="1.3" fill="#fff" opacity="0.85"/><rect x="3.5" y="9.8" width="5" height="1.3" fill="#fff"/></svg>
<div class="t lnk" style="left:41.8px;top:1041px;letter-spacing:0.12px;">2020-09-03 Meeting notes</div>
<div class="t cnt ctr" style="left:707px;top:1041px;">4</div>
<svg class="doc" style="left:16px;top:1095px" viewBox="0 0 16 16"><rect width="16" height="16" rx="2.5" fill="#0065FF"/><rect x="3.5" y="5" width="9" height="1.3" fill="#fff"/><rect x="3.5" y="7.4" width="9" height="1.3" fill="#fff" opacity="0.85"/><rect x="3.5" y="9.8" width="5" height="1.3" fill="#fff"/></svg>
<div class="t lnk" style="left:41.8px;top:1095px;letter-spacing:0.29px;">Marketing-Projekte</div>
<div class="t cnt ctr" style="left:707px;top:1095px;">3</div>
<div class="ava" style="left:803px;top:816px"><svg viewBox="0 0 32 32" width="32" height="32"><rect width="32" height="32" fill="#f2f2f2"/><path d="M0 22 Q4 24 6 32 L0 32Z" fill="#c8c8c8" opacity="0.6"/><path d="M0 32 L0 28.5 Q5 26.5 10.5 25 L16 30 L22 25 Q28 26.5 32 29 L32 32Z" fill="#1e1f26"/><path d="M10.5 25 L14 32 L19 32 L22 25 Q16 27 10.5 25Z" fill="#8db6e6"/><path d="M14.5 29 L17.5 29 L17 32 L15 32Z" fill="#b07850"/><path d="M11.5 21 L20.5 21 L21 26 Q16 28 11 26Z" fill="#c99580"/><ellipse cx="15.5" cy="10" rx="8.6" ry="8.5" fill="#4d3524"/><ellipse cx="15.5" cy="14" rx="8" ry="10" fill="#dcaa95"/><path d="M15.5 4 Q23 5 23.5 13 Q23 22 17 24.5 Q20 16 15.5 4Z" fill="#b98068" opacity="0.7"/><ellipse cx="7.2" cy="14" rx="1.3" ry="2.3" fill="#d09c85"/><ellipse cx="23.6" cy="14" rx="1.3" ry="2.3" fill="#a87058"/><path d="M7 11.5 Q6.5 1 15.5 1 Q24.5 1 24 11.5 Q23 7 19 6.5 Q15 6 11 7 Q8 8 7 11.5Z" fill="#4d3524"/><path d="M11 12.5 h3 M17 12.5 h3" stroke="#7a5040" stroke-width="1"/><path d="M12 19.5 Q15.5 21.5 19 19.5" stroke="#9a6050" stroke-width="1" fill="none"/></svg></div>
<div class="t lnk" style="left:845px;top:825px;letter-spacing:0px;">Edmond Preiser</div>
<div class="t cnt" style="right:10.4px;top:825px;letter-spacing:0.8px;margin-right:-0.8px">128</div>
<div class="ava" style="left:803px;top:870px"><svg viewBox="0 0 32 32" width="32" height="32"><rect width="32" height="32" fill="#a2a9b7"/><path d="M1.5 32 Q6 26 12 25 L16 28 L18.5 32Z" fill="#e6eef7"/><path d="M18 27 L24 26 Q26 29 26 32 L18.5 32Z" fill="#1f3a6e"/><path d="M13 22 L20 22 L20 28 Q16 30 13 27Z" fill="#b98a72"/><ellipse cx="16" cy="11" rx="8.8" ry="8.8" fill="#4a3222"/><ellipse cx="16.3" cy="16" rx="6.8" ry="9.5" fill="#d6a590"/><path d="M16 7 Q23 8 23 15 Q23 24 17.5 26 Q21 16 16 7Z" fill="#9c7360" opacity="0.75"/><ellipse cx="8.8" cy="16.5" rx="1.4" ry="2.5" fill="#c9957e"/><ellipse cx="23.5" cy="16.5" rx="1.3" ry="2.4" fill="#8c6250"/><path d="M7.5 15 Q6.5 2.5 16 2.5 Q25 2.5 24.5 13 Q23.5 9 20 8.5 Q15 8 11 9.5 Q8.5 11 7.5 15Z" fill="#4a3222"/><path d="M12 15 h3 M18 15 h3" stroke="#5a4038" stroke-width="1"/><path d="M13.5 22 Q16.5 23.5 19 22" stroke="#7a5040" stroke-width="0.9" fill="none"/></svg></div>
<div class="t lnk" style="left:845px;top:879px;letter-spacing:-0.25px;">François Leuba</div>
<div class="t cnt" style="right:10.4px;top:879px;letter-spacing:0.8px;margin-right:-0.8px">3</div>
<div class="ava" style="left:803px;top:924px"><svg viewBox="0 0 32 32" width="32" height="32"><rect width="32" height="32" fill="#8e8b7a"/><rect x="0" y="0" width="7" height="32" fill="#9a9888"/><circle cx="3" cy="6" r="2.5" fill="#6f7058"/><circle cx="4" cy="20" r="3" fill="#7a6a50"/><circle cx="29" cy="8" r="3" fill="#a7a79a"/><circle cx="28" cy="22" r="3" fill="#6b6350"/><path d="M0 27 Q3 26 6 32 L0 32Z" fill="#2a2420"/><path d="M23 27 Q29 26 32 28 L32 32 L22 32Z" fill="#3c78c0"/><path d="M12 24 L24 24 L25 32 L13 32Z" fill="#7a5038"/><ellipse cx="14.5" cy="16" rx="8.2" ry="11" fill="#a87458"/><path d="M8 14 Q9 18 12 19 Q12 15 10 13Z" fill="#e4bc9a"/><path d="M7.5 19 Q8 28 15 28.5 Q21 28 22.5 20 Q19 22 15 21 Q10 21 7.5 19Z" fill="#3a2a1e"/><path d="M10 23.5 Q14 24.5 17 23.5" stroke="#a07060" stroke-width="1" fill="none"/><circle cx="10.5" cy="13" r="1.1" fill="#1a1410"/><circle cx="16.5" cy="13" r="1.1" fill="#2a1d14"/><path d="M7 10 Q7 1.5 16 1 Q26 1 27 10 Q28.5 20 26.5 28 L21.5 27 Q23 16 20.5 9 Q16 5 10 7.5 Q8 8.5 7 10Z" fill="#1f1510"/></svg></div>
<div class="t lnk" style="left:845px;top:933px;letter-spacing:0.45px;">Alberto Müller</div>
<div class="t cnt" style="right:10.4px;top:933px;letter-spacing:0.8px;margin-right:-0.8px">3</div>

<div class="line" style="left:0;top:1121px;width:1572px;height:2px;background:#F4F5F7;"></div>
</body></html>
